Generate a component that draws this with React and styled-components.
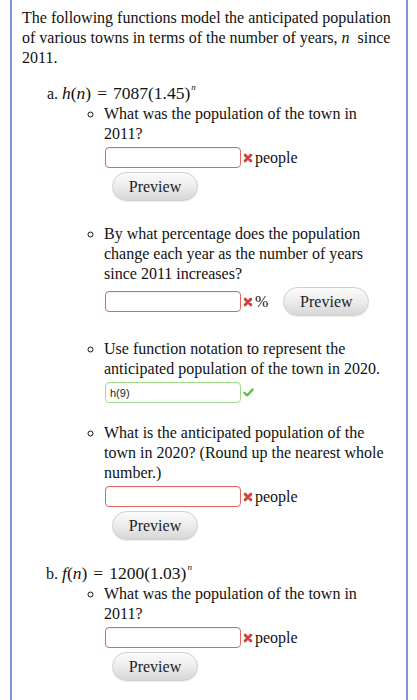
import React from 'react';
import styled, { createGlobalStyle } from 'styled-components';

const GlobalStyle = createGlobalStyle`
  body {
    margin: 0;
    background: #fff;
    font-family: "Liberation Serif", "Times New Roman", serif;
    font-size: 16px;
    color: #111;
  }
`;

function CrossIcon() {
  return (
    <svg width="10" height="10" viewBox="0 0 10 10">
      <path d="M2.2 2.2 L7.8 7.8 M7.8 2.2 L2.2 7.8" stroke="#d63f38" strokeWidth="3" strokeLinecap="round" />
    </svg>
  );
}

function CheckIcon() {
  return (
    <svg width="11" height="9" viewBox="0 0 11 9">
      <path d="M1.5 4.8 L4.2 7.3 L9.6 1.6" stroke="#67bd45" strokeWidth="2.5" fill="none" strokeLinecap="round" strokeLinejoin="round" />
    </svg>
  );
}

function Answer({ unit, value, ok, inlinePreview }) {
  return (
    <AnswerRow>
      <Input ok={ok} defaultValue={value} readOnly />
      <Status>{ok ? <CheckIcon /> : <CrossIcon />}</Status>
      {unit && <Unit>{unit}</Unit>}
      {inlinePreview && <PreviewButton inline>Preview</PreviewButton>}
    </AnswerRow>
  );
}

function App() {
  return (
    <>
      <GlobalStyle />
      <Frame>
        <Intro>
          The following functions model the anticipated population of various towns in terms of
          the number of years, <Var>n</Var>&nbsp; since 2011.
        </Intro>
        <PartList>
          <Part>
            <Formula>
              <Var>h</Var>(<Var>n</Var>)<Eq>=</Eq>7087(1.45)<Sup><Var>n</Var></Sup>
            </Formula>
            <QuestionList>
              <Question>
                What was the population of the town in 2011?
                <Answer unit="people" />
                <PreviewButton>Preview</PreviewButton>
              </Question>
              <Question>
                By what percentage does the population change each year as the number of years
                since 2011 increases?
                <Answer unit="%" inlinePreview />
              </Question>
              <Question tight>
                Use function notation to represent the anticipated population of the town in 2020.
                <Answer value="h(9)" ok />
              </Question>
              <Question>
                What is the anticipated population of the town in 2020? (Round up the nearest whole
                number.)
                <Answer unit="people" />
                <PreviewButton>Preview</PreviewButton>
              </Question>
            </QuestionList>
          </Part>
          <Part>
            <Formula>
              <Var>f</Var>(<Var>n</Var>)<Eq>=</Eq>1200(1.03)<Sup><Var>n</Var></Sup>
            </Formula>
            <QuestionList>
              <Question>
                What was the population of the town in 2011?
                <Answer unit="people" />
                <PreviewButton>Preview</PreviewButton>
              </Question>
            </QuestionList>
          </Part>
        </PartList>
      </Frame>
    </>
  );
}

export default App;

/* CSS */
const Frame = styled.div`
  margin: 0 9px 0 10px;
  min-height: 700px;
  box-sizing: border-box;
  padding: 8px 10px 10px 10px;
  border-left: 2px solid #7d93db;
  border-right: 2px solid #7d93db;
`;

const Intro = styled.p`
  margin: 0 0 14px;
  line-height: 20px;
`;

const Var = styled.i`
  font-style: italic;
`;

const PartList = styled.ol`
  list-style: lower-alpha;
  margin: 0;
  padding-left: 40px;
`;

const Part = styled.li`
  line-height: 20px;
  margin-bottom: 22px;

  &:last-child {
    margin-bottom: 0;
  }
`;

const Formula = styled.div`
  font-size: 17.5px;
  line-height: 22px;
  white-space: nowrap;
`;

const Eq = styled.span`
  margin: 0 6px;
`;

const Sup = styled.sup`
  font-size: 9px;
  vertical-align: 9px;
  line-height: 0;
  margin-left: 1px;
`;

const QuestionList = styled.ul`
  list-style: circle;
  margin: 0;
  padding-left: 42px;
`;

const Question = styled.li`
  line-height: 20px;
  margin-bottom: ${p => (p.tight ? '20px' : '23px')};

  &:last-child {
    margin-bottom: 0;
  }
`;

const AnswerRow = styled.div`
  display: flex;
  align-items: center;
  min-height: 21px;
  margin-top: 3px;
`;

const Input = styled.input`
  width: 136px;
  height: 21px;
  box-sizing: border-box;
  padding: 0 4px;
  margin: 0 0 0 1px;
  border: 1px solid ${p => (p.ok ? '#a2dc8e' : '#e0655f')};
  border-radius: 4px;
  background: #fff;
  box-shadow: inset 0 1px 1px rgba(0, 0, 0, 0.05);
  font-family: "Liberation Sans", Arial, sans-serif;
  font-size: 11px;
  color: #222;
  outline: none;
`;

const Status = styled.span`
  display: inline-flex;
  align-items: center;
  margin-left: 2px;
`;

const Unit = styled.span`
  margin-left: 2px;
  font-size: 16px;
`;

const PreviewButton = styled.button`
  display: block;
  width: 86px;
  height: 29px;
  margin: ${p => (p.inline ? '0 0 0 15px' : '4px 0 0 8px')};
  padding: 0;
  border: 1px solid #cfcfcf;
  border-radius: 15px;
  background: linear-gradient(to bottom, #fbfbfb 0%, #ececec 50%, #d6d6d6 100%);
  box-shadow: 0 1px 1px rgba(0, 0, 0, 0.08);
  font-family: "Liberation Serif", "Times New Roman", serif;
  font-size: 16px;
  color: #222;
  cursor: pointer;
`;
